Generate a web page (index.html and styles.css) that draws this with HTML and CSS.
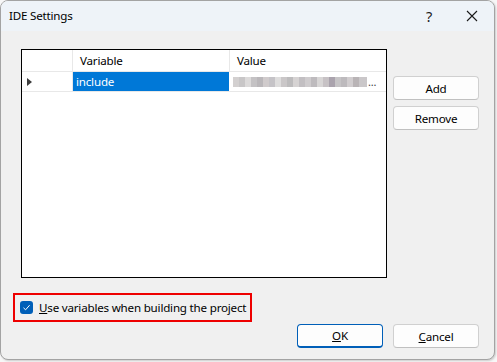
FILE: index.html
```html
<!DOCTYPE html>
<html>
<head>
<meta charset="utf-8">
<link rel="stylesheet" href="styles.css">
</head>
<body>
<div class="window">
  <div class="titlebar">
    <span class="title">IDE Settings</span>
    <span class="help">?</span>
    <svg class="close" width="12" height="12" viewBox="0 0 12 12"><path d="M1 1 L11 11 M11 1 L1 11" stroke="#1a1a1a" stroke-width="1.1" fill="none"/></svg>
  </div>
  <div class="content">
    <div class="main">
      <div class="grid">
        <div class="row head">
          <div class="cell rh"></div>
          <div class="cell c1 htext">Variable</div>
          <div class="cell c2 htext">Value</div>
        </div>
        <div class="row data">
          <div class="cell rh"><span class="arrow"></span></div>
          <div class="cell c1 sel">include</div>
          <div class="cell c2 val"><span class="blur"></span><span class="dots">...</span></div>
        </div>
      </div>
      <div class="side">
        <button class="btn">Add</button>
        <button class="btn">Remove</button>
      </div>
    </div>
    <div class="checkrow">
      <label class="check">
        <span class="box"><svg width="9" height="9" viewBox="0 0 9 9"><path d="M1.5 4.8 L3.6 6.8 L7.6 2.2" stroke="#fff" stroke-width="1" fill="none"/></svg></span>
        <span class="label"><u>U</u>se variables when building the project</span>
      </label>
    </div>
    <div class="footer">
      <button class="btn ok"><u>O</u>K</button>
      <button class="btn"><u>C</u>ancel</button>
    </div>
  </div>
</div>
</body>
</html>
```

FILE: styles.css
```css
* { box-sizing: border-box; }
html, body { margin: 0; padding: 0; }
body {
  width: 497px;
  height: 362px;
  background: #f7f7f7;
  font-family: "Noto Sans", "Open Sans", sans-serif;
  font-size: 11.6px;
  letter-spacing: -0.2px;
  color: #000;
  overflow: hidden;
}
.window {
  width: 495px;
  height: 360px;
  border: 1px solid #a3a3a3;
  border-radius: 8px;
  background: #f0f0f0;
  overflow: hidden;
  box-shadow: 1px 1px 2px rgba(0,0,0,0.18);
  display: flex;
  flex-direction: column;
}
.titlebar {
  height: 30px;
  flex: none;
  background: #eef3f8;
  display: flex;
  align-items: center;
  padding-left: 8px;
}
.title { flex: 1; padding-bottom: 1px; }
.help { font-size: 14.5px; margin-right: 34px; color: #1a1a1a; padding-bottom: 1px; }
.close { margin-right: 16px; }
.content {
  flex: 1;
  display: flex;
  flex-direction: column;
  padding: 18px 15px 0 20px;
}
.main { display: flex; gap: 6px; }
.grid {
  width: 367px;
  height: 229px;
  border: 1px solid #000;
  background: #fff;
}
.row { display: flex; border-bottom: 1px solid #e8e8e8; }
.row.head { height: 22px; }
.row.data { height: 20px; }
.cell { border-right: 1px solid #e8e8e8; display: flex; align-items: center; }
.rh { width: 51px; }
.c1 { width: 157px; }
.c2 { flex: 1; border-right: none; }
.htext { padding-left: 7px; }
.sel { background: #0078d7; color: #fff; padding-left: 3px; border-right-color: #fff; }
.arrow {
  margin-left: 5px;
  width: 0; height: 0;
  border-top: 4.5px solid transparent;
  border-bottom: 4.5px solid transparent;
  border-left: 5px solid #3c3c3c;
}
.val { padding-left: 3px; }
.blur {
  width: 134px;
  height: 10px;
  background: linear-gradient(90deg,
    #d3d0d0 0 6px, #c8c6c7 6px 12px, #dcdada 12px 18px, #c4c2c4 18px 24px, #bab7ba 24px 30px,
    #d0cbcc 30px 36px, #c5c3c7 36px 42px, #dedddd 42px 48px, #cac7c8 48px 54px, #bdbcbd 54px 60px,
    #d6d3d3 60px 66px, #c2bfc2 66px 72px, #cfccce 72px 78px, #bebbbe 78px 84px, #d8d6d6 84px 90px,
    #c7c2c5 90px 96px, #aaa3ad 96px 102px, #c6c4c6 102px 108px, #bdbabd 108px 114px, #d1cdcf 114px 120px,
    #b9b4b6 120px 126px, #cac7c9 126px 134px);
  filter: blur(0.4px);
}
.dots { margin-left: 1px; color: #444; font-size: 11px; }
.side { display: flex; flex-direction: column; gap: 6px; padding-top: 27px; }
.btn {
  width: 86px;
  height: 24px;
  background: #fdfdfd;
  border: 1px solid #d0d0d0;
  border-bottom-color: #c0c0c0;
  border-radius: 4px;
  font-family: inherit;
  font-size: 11.6px;
  letter-spacing: -0.2px;
  color: #000;
  padding: 0;
}
.checkrow { padding: 15px 0 0 0; margin-left: -8px; }
.check {
  display: inline-flex;
  align-items: center;
  gap: 6px;
  width: 239px;
  height: 29px;
  border: 2px solid #ee0000;
  padding-left: 5px;
}
.box {
  width: 13px; height: 13px;
  border-radius: 3px;
  background: #005fb8;
  display: flex; align-items: center; justify-content: center;
}
.label { white-space: nowrap; }
.footer { display: flex; justify-content: flex-end; gap: 10px; padding-top: 2px; }
.btn.ok { border: 1px solid #005fb8; border-bottom-width: 2px; }
```
